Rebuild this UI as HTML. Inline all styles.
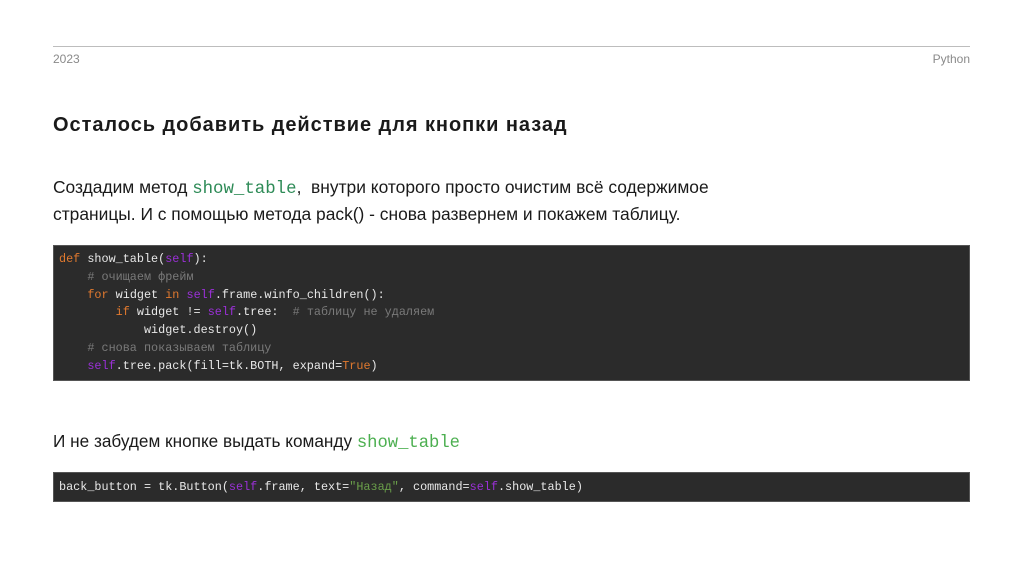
<!DOCTYPE html>
<html><head><meta charset="utf-8"><style>
body{margin:0;width:1024px;height:574px;background:#fff;position:relative;font-family:"Liberation Sans","DejaVu Sans",sans-serif;overflow:hidden}
.line{position:absolute;left:53px;top:46px;width:917px;height:1px;background:#bdbdbd}
.sm{position:absolute;top:52px;font-size:12px;color:#8a8a8a}
h1{position:absolute;left:53px;top:114px;margin:0;font-size:20px;letter-spacing:0.95px;font-weight:bold;color:#1a1a1a}
.p{position:absolute;left:53px;font-size:17.4px;color:#1a1a1a;line-height:25px}
.g{font-family:"Liberation Mono",monospace;color:#2e8b57}
.code{position:absolute;left:53px;width:917px;background:#2b2b2b;border:1px solid #555;box-sizing:border-box;font-family:"Liberation Mono","DejaVu Sans Mono",monospace;font-size:11.8px;color:#e8e8e8;line-height:17.8px;padding:0 5px;white-space:pre}
.k{color:#e0792f}.s{color:#9b30d8}.c{color:#7a7a7a}.t{color:#6a9f4a}
</style></head><body>
<div class="line"></div>
<div class="sm" style="left:53px">2023</div>
<div class="sm" style="right:54px">Python</div>
<h1>Осталось добавить действие для кнопки назад</h1>
<div class="p" style="top:175px">Создадим метод <span class="g">show_table</span>,&nbsp; внутри которого просто очистим всё содержимое<br>страницы. И с помощью метода pack() - снова развернем и покажем таблицу.</div>
<div class="code" style="top:245px;height:136px;padding-top:5px"><span class="k">def</span> show_table(<span class="s">self</span>):
    <span class="c"># очищаем фрейм</span>
    <span class="k">for</span> widget <span class="k">in</span> <span class="s">self</span>.frame.winfo_children():
        <span class="k">if</span> widget != <span class="s">self</span>.tree:  <span class="c"># таблицу не удаляем</span>
            widget.destroy()
    <span class="c"># снова показываем таблицу</span>
    <span class="s">self</span>.tree.pack(fill=tk.BOTH, expand=<span class="k">True</span>)</div>
<div class="p" style="top:429px;font-size:17.2px">И не забудем кнопке выдать команду <span class="g" style="color:#4caf50">show_table</span></div>
<div class="code" style="top:472px;height:30px;padding-top:6px">back_button = tk.Button(<span class="s">self</span>.frame, text=<span class="t">"Назад"</span>, command=<span class="s">self</span>.show_table)</div>
</body></html>
